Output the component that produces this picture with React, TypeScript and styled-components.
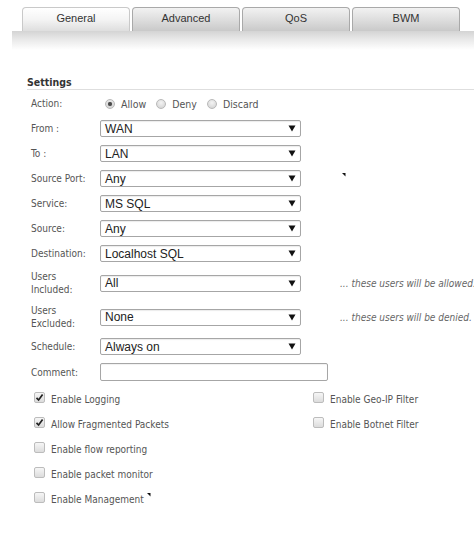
import React from "react";
import styled, { createGlobalStyle } from "styled-components";

const Global = createGlobalStyle`
  html, body { margin: 0; padding: 0; background: #ffffff; overflow: hidden; }
  * { box-sizing: border-box; }
`;

const LABEL_FONT = `"DejaVu Sans Condensed", "DejaVu Sans", "Noto Sans", sans-serif`;
const FIELD_FONT = `"Liberation Sans", Arial, sans-serif`;

const Page = styled.div`
  width: 474px;
  height: 539px;
  font-family: ${LABEL_FONT};
  font-size: 10px;
  color: #555;
`;

const TabBar = styled.div`
  display: flex;
  gap: 2px;
  padding: 7px 0 0 22px;
`;

const Tab = styled.div<{ $active?: boolean }>`
  width: 108px;
  height: 24px;
  padding-top: 3px;
  text-align: center;
  font-family: ${FIELD_FONT};
  font-size: 11px;
  line-height: 14px;
  color: #333;
  border: 1px solid ${(p) => (p.$active ? "#c9c9c9" : "#a9a9a9")};
  border-bottom: none;
  border-radius: 4px 4px 0 0;
  background: ${(p) =>
    p.$active
      ? "linear-gradient(#ffffff 0%, #f4f4f4 50%, #dedede 100%)"
      : "linear-gradient(#f2f2f2 0%, #dcdcdc 55%, #c9c9c9 100%)"};
`;

const TabBand = styled.div`
  margin-left: 12px;
  height: 19px;
  background: linear-gradient(#d4d4d4 0%, #e9e9e9 45%, #ffffff 100%);
`;

const SectionHeader = styled.div`
  margin: 25px 0 0 27px;
  height: 15px;
  line-height: 14px;
  font-weight: bold;
  font-size: 10.5px;
  color: #333;
  border-bottom: 1px solid #dedede;
`;

const Form = styled.div`
  margin-top: 1px;
  padding-left: 31px;
`;

const Row = styled.div`
  display: grid;
  grid-template-columns: 69px 240px 1fr;
  align-items: center;
  padding: 4px 0;
  min-height: 25px;
`;

const Label = styled.div`
  line-height: 13px;
  color: #555;
`;

const RadioGroup = styled.div`
  display: flex;
  align-items: center;
  height: 17px;
  padding-left: 5px;
`;

const RadioItem = styled.label`
  display: flex;
  align-items: center;
  gap: 6px;
  margin-right: 10px;
  font-size: 10.5px;
  color: #555;
`;

const RadioDot = styled.span<{ $checked?: boolean }>`
  width: 10px;
  height: 10px;
  border-radius: 50%;
  border: 1px solid #b9b9b9;
  background: radial-gradient(circle at 50% 35%, #f4f4f4 0%, #dadada 70%, #cfcfcf 100%);
  display: inline-flex;
  align-items: center;
  justify-content: center;
  &::after {
    content: "";
    display: ${(p) => (p.$checked ? "block" : "none")};
    width: 4px;
    height: 4px;
    border-radius: 50%;
    background: #4a4a4a;
    box-shadow: 0 0 1px #777;
  }
`;

const SelectBox = styled.div`
  width: 201px;
  height: 17px;
  border: 1px solid #a6a6a6;
  border-radius: 2px;
  box-shadow: inset 0 1px 1px rgba(0, 0, 0, 0.08);
  background: #fff;
  display: flex;
  align-items: center;
  justify-content: space-between;
  padding: 0 4px 0 4px;
  font-family: ${FIELD_FONT};
  font-size: 12px;
  color: #222;
`;

const TextInput = styled.div`
  width: 228px;
  height: 18px;
  border: 1px solid #a6a6a6;
  border-radius: 2px;
  box-shadow: inset 0 1px 1px rgba(0, 0, 0, 0.06);
  background: #fff;
`;

const Note = styled.div`
  white-space: nowrap;
  font-style: italic;
  font-size: 10px;
  color: #666;
`;

const Mark = styled.svg<{ $dx?: number; $dy?: number }>`
  display: inline-block;
  width: 4px;
  height: 4px;
  margin-left: ${(p) => p.$dx ?? 0}px;
  position: relative;
  top: ${(p) => p.$dy ?? 0}px;
`;

const Checks = styled.div`
  margin-top: 2px;
  padding-left: 34px;
  display: grid;
  grid-template-columns: 279px 1fr;
  grid-auto-rows: 25px;
  align-items: center;
`;

const CheckItem = styled.label`
  display: flex;
  align-items: center;
  gap: 6px;
  font-size: 10px;
  color: #555;
  white-space: nowrap;
`;

const Box = styled.span`
  width: 11px;
  height: 11px;
  border: 1px solid #bcbcbc;
  border-radius: 2px;
  background: linear-gradient(#f6f6f6, #dcdcdc);
  display: inline-flex;
  align-items: center;
  justify-content: center;
  position: relative;
  top: -2px;
`;

const Arrow = () => (
  <svg width="8" height="7" viewBox="0 0 8 7">
    <path d="M0.5 0.5 H7.5 L4 6.5 Z" fill="#111" />
  </svg>
);

const Tick = () => (
  <svg width="9" height="9" viewBox="0 0 9 9">
    <path d="M1.5 4.8 L3.6 7 L7.6 1.6" stroke="#222" strokeWidth="1.7" fill="none" />
  </svg>
);

const CursorMark = ({ dx, dy }: { dx?: number; dy?: number }) => (
  <Mark $dx={dx} $dy={dy} viewBox="0 0 4 4">
    <path d="M0 0 H3.5 V3.5 Z" fill="#111" />
  </Mark>
);

const Select = ({ value }: { value: string }) => (
  <SelectBox>
    <span>{value}</span>
    <Arrow />
  </SelectBox>
);

const Check = ({ label, checked, children }: { label: string; checked?: boolean; children?: React.ReactNode }) => (
  <CheckItem>
    <Box>{checked && <Tick />}</Box>
    <span>
      {label}
      {children}
    </span>
  </CheckItem>
);

export default function App() {
  return (
    <Page>
      <Global />
      <TabBar>
        <Tab $active>General</Tab>
        <Tab>Advanced</Tab>
        <Tab>QoS</Tab>
        <Tab>BWM</Tab>
      </TabBar>
      <TabBand />
      <SectionHeader>Settings</SectionHeader>
      <Form>
        <Row>
          <Label>Action:</Label>
          <RadioGroup>
            <RadioItem>
              <RadioDot $checked />
              Allow
            </RadioItem>
            <RadioItem>
              <RadioDot />
              Deny
            </RadioItem>
            <RadioItem>
              <RadioDot />
              Discard
            </RadioItem>
          </RadioGroup>
        </Row>
        <Row>
          <Label>From :</Label>
          <Select value="WAN" />
        </Row>
        <Row>
          <Label>To :</Label>
          <Select value="LAN" />
        </Row>
        <Row>
          <Label>Source Port:</Label>
          <Select value="Any" />
          <div>
            <CursorMark dx={2} dy={-5} />
          </div>
        </Row>
        <Row>
          <Label>Service:</Label>
          <Select value="MS SQL" />
        </Row>
        <Row>
          <Label>Source:</Label>
          <Select value="Any" />
        </Row>
        <Row>
          <Label>Destination:</Label>
          <Select value="Localhost SQL" />
        </Row>
        <Row>
          <Label>
            Users
            <br />
            Included:
          </Label>
          <Select value="All" />
          <Note>... these users will be allowed.</Note>
        </Row>
        <Row>
          <Label>
            Users
            <br />
            Excluded:
          </Label>
          <Select value="None" />
          <Note>... these users will be denied.</Note>
        </Row>
        <Row>
          <Label>Schedule:</Label>
          <Select value="Always on" />
        </Row>
        <Row>
          <Label>Comment:</Label>
          <TextInput />
        </Row>
      </Form>
      <Checks>
        <Check label="Enable Logging" checked />
        <Check label="Enable Geo-IP Filter" />
        <Check label="Allow Fragmented Packets" checked />
        <Check label="Enable Botnet Filter" />
        <Check label="Enable flow reporting" />
        <div />
        <Check label="Enable packet monitor" />
        <div />
        <Check label="Enable Management">
          <CursorMark dx={3} dy={-6} />
        </Check>
      </Checks>
    </Page>
  );
}
